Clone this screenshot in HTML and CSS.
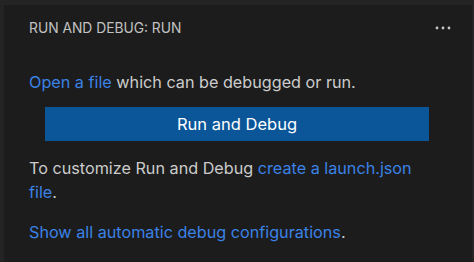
FILE: index.html
```html
<!DOCTYPE html>
<html lang="en">
<head>
    <meta charset="UTF-8">
    <title>Run and Debug</title>
    <link rel="stylesheet" href="styles.css">
</head>
<body>
    <div class="panel">
        <div class="panel-header">
            <span class="panel-title">RUN AND DEBUG: RUN</span>
            <span class="panel-actions">
                <svg width="18" height="16" viewBox="0 0 18 16" fill="#c5c5c5">
                    <circle cx="3" cy="8" r="1.4"/>
                    <circle cx="9" cy="8" r="1.4"/>
                    <circle cx="15" cy="8" r="1.4"/>
                </svg>
            </span>
        </div>
        <div class="panel-body">
            <p class="line"><a href="#">Open a file</a> which can be debugged or run.</p>
            <button class="btn">Run and Debug</button>
            <p class="line">To customize Run and Debug <a href="#">create a launch.json file</a>.</p>
            <p class="line"><a href="#">Show all automatic debug configurations</a>.</p>
        </div>
    </div>
</body>
</html>
```

FILE: styles.css
```css
/* General Styles */
body {
    margin: 0;
    padding: 5px 2px 0 4px;
    background-color: #242424;
    font-family: 'Inter', 'Roboto', sans-serif;
    color: #cccccc;
}
.panel {
    height: 257px;
    background-color: #1c1c1c;
    box-sizing: border-box;
    padding: 0 34px 0 25px;
}
.panel-header {
    display: flex;
    justify-content: space-between;
    align-items: center;
    height: 46px;
    margin-right: -14px;
}
.panel-title {
    font-size: 13.8px;
    color: #c2c2c2;
}
.panel-actions {
    display: flex;
    align-items: center;
}
.panel-body {
    padding-top: 19px;
}
.line {
    margin: 0 0 16px;
    font-size: 16.2px;
    line-height: 24px;
}
.line a {
    color: #3b82e6;
    text-decoration: none;
}
.btn {
    display: block;
    width: 384px;
    height: 34px;
    margin: -3px 0 15px 16px;
    border: none;
    background-color: #0b5699;
    color: #ffffff;
    font-family: inherit;
    font-size: 16.5px;
    cursor: pointer;
}
```
